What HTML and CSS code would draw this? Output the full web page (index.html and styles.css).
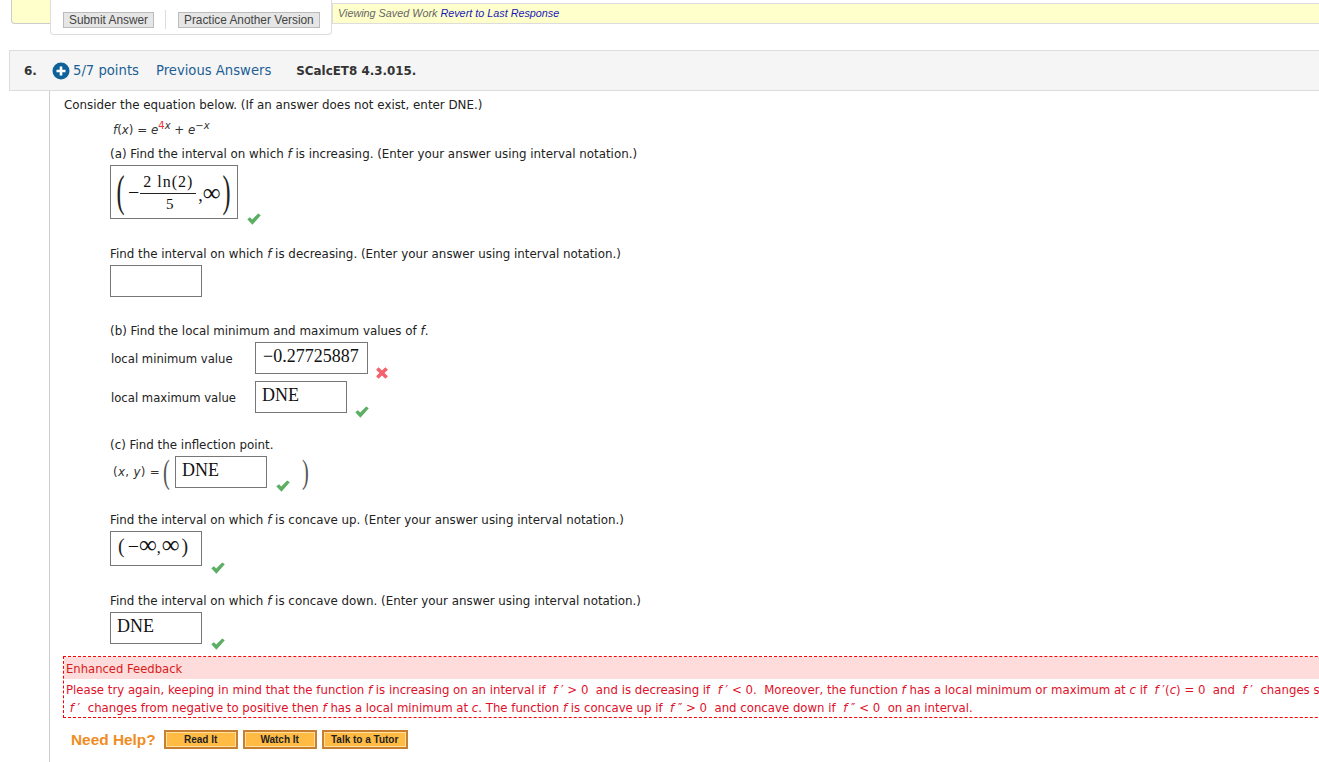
FILE: index.html
```html
<!DOCTYPE html>
<html lang="en">
<head>
<meta charset="utf-8">
<title>Question 6</title>
<link rel="stylesheet" href="styles.css">
</head>
<body>
<svg class="defs" width="0" height="0" aria-hidden="true">
  <symbol id="ok" viewBox="0 0 14 12"><path d="M0.3 6.2 L3 4.2 L5.2 6.4 L11.2 0.4 L13.8 2.2 L5.4 11.8 Z" fill="#5cae62"/></symbol>
  <symbol id="no" viewBox="0 0 12 12"><path d="M2.6 0.2 L6 3.5 L9.4 0.2 L11.9 2.7 L8.5 6 L11.9 9.3 L9.4 11.8 L6 8.5 L2.6 11.8 L0.1 9.3 L3.5 6 L0.1 2.7 Z" fill="#f4606c"/></symbol>
</svg>
<div class="page">
  <div class="topbar">
    <div class="note-left"></div>
    <div class="actions">
      <button class="gray-btn">Submit Answer</button>
      <span class="sep"></span>
      <button class="gray-btn">Practice Another Version</button>
    </div>
    <div class="note-right"><em>Viewing Saved Work <a class="revert">Revert to Last Response</a></em></div>
  </div>

  <div class="qhead">
    <span class="qnum">6.</span>
    <svg class="plus" viewBox="0 0 18 18"><circle cx="9" cy="9" r="8.5" fill="#0f6299"/><path d="M9 4.5v9M4.5 9h9" stroke="#fff" stroke-width="2.6"/></svg>
    <span class="qpoints">5/7 points</span>
    <span class="qprev">Previous Answers</span>
    <span class="qcode">SCalcET8 4.3.015.</span>
  </div>

  <div class="qbody">
    <p class="line intro">Consider the equation below. (If an answer does not exist, enter DNE.)</p>
    <div class="inner">
      <p class="line eq"><i>f</i>(<i>x</i>) = <i>e</i><sup><span class="red">4</span><i>x</i></sup> + <i>e</i><sup>−<i>x</i></sup></p>
      <p class="line q-a">(a) Find the interval on which <i>f</i> is increasing. (Enter your answer using interval notation.)</p>
      <div class="ansrow">
        <div class="box box-frac">
          <span class="paren big">(</span><span class="minus">−</span>
          <span class="frac"><span class="num">2 ln(2)</span><span class="den">5</span></span>
          <span class="tail">,<span class="inf">∞</span></span><span class="paren big">)</span>
        </div>
        <svg class="mark mark-frac"><use href="#ok"/></svg>
      </div>
      <p class="line q-dec">Find the interval on which <i>f</i> is decreasing. (Enter your answer using interval notation.)</p>
      <div class="box box-empty"></div>
      <p class="line q-b">(b) Find the local minimum and maximum values of <i>f</i>.</p>
      <div class="valrow val-min">
        <span class="vallabel">local minimum value</span>
        <div class="box box-wide">−0.27725887</div>
        <svg class="mark mark-no"><use href="#no"/></svg>
      </div>
      <div class="valrow val-max">
        <span class="vallabel">local maximum value</span>
        <div class="box box-std">DNE</div>
        <svg class="mark mark-b"><use href="#ok"/></svg>
      </div>
      <p class="line q-c">(c) Find the inflection point.</p>
      <div class="xyrow">
        <span class="xy">(<i>x</i>, <i>y</i>) =</span>
        <span class="paren mid">(</span>
        <div class="box box-std">DNE</div>
        <svg class="mark mark-c"><use href="#ok"/></svg>
        <span class="paren mid close">)</span>
      </div>
      <p class="line q-up">Find the interval on which <i>f</i> is concave up. (Enter your answer using interval notation.)</p>
      <div class="ansrow">
        <div class="box box-inf"><span class="paren small">(</span><span class="minus-s">−</span><span class="inf">∞</span><span class="comma">,</span><span class="inf">∞</span><span class="paren small closing">)</span></div>
        <svg class="mark mark-inf"><use href="#ok"/></svg>
      </div>
      <p class="line q-down">Find the interval on which <i>f</i> is concave down. (Enter your answer using interval notation.)</p>
      <div class="ansrow">
        <div class="box box-std box-last">DNE</div>
        <svg class="mark mark-last"><use href="#ok"/></svg>
      </div>
    </div>
    <div class="feedback">
      <div class="fb-title">Enhanced Feedback</div>
      <div class="fb-line fb-first">Please try again, keeping in mind that the function <i>f</i> is increasing on an interval if&nbsp; <i>f</i> ′ &gt; 0&nbsp; and is decreasing if&nbsp; <i>f</i> ′ &lt; 0.&nbsp; Moreover, the function <i>f</i> has a local minimum or maximum at <i>c</i> if&nbsp; <i>f</i> ′(<i>c</i>) = 0&nbsp; and&nbsp; <i>f</i> ′&nbsp; changes sign at <i>c</i>. If</div>
      <div class="fb-line fb-second">&nbsp;<i>f</i> ′&nbsp; changes from negative to positive then <i>f</i> has a local minimum at <i>c</i>. The function <i>f</i> is concave up if&nbsp; <i>f</i> ″ &gt; 0&nbsp; and concave down if&nbsp; <i>f</i> ″ &lt; 0&nbsp; on an interval.</div>
    </div>
    <div class="help">
      <span class="help-label">Need Help?</span>
      <button class="help-btn">Read It</button>
      <button class="help-btn">Watch It</button>
      <button class="help-btn wide">Talk to a Tutor</button>
    </div>
  </div>
</div>
</body>
</html>
```

FILE: styles.css
```css
html, body { margin: 0; padding: 0; background: #fff; overflow: hidden; }
body { font-family: "DejaVu Sans", Verdana, sans-serif; font-size: 11.87px; color: #222; }
.defs { position: absolute; }
.page { width: 1319px; height: 762px; overflow: hidden; }

.topbar { display: flex; align-items: flex-start; height: 50px; margin-left: 11px; }
.note-left { width: 38px; height: 23px; background: #ffffcc; border: 1px solid #ccc; border-top: 0; border-right: 0; border-radius: 0 0 0 4px; }
.actions { display: flex; align-items: center; gap: 11px; width: 282px; height: 35px; box-sizing: border-box; padding: 5px 0 0 12px; border: 1px solid #ddd; border-top: 0; border-radius: 0 0 4px 4px; }
.gray-btn { font-family: "Liberation Sans", Arial, sans-serif; font-size: 11.85px; color: #444; background: #e6e6e6; border: 1px solid #bbb; padding: 0 5px; height: 16px; line-height: 14px; white-space: nowrap; }
.sep { width: 1px; height: 19px; background: #ddd; margin-right: 1px; }
.note-right { flex: 1; height: 21px; margin-top: 3px; box-sizing: border-box; background: #ffffcc; border: 1px solid #ddd; border-right: 0; padding-left: 5px; font-family: "Liberation Sans", Arial, sans-serif; font-size: 10.8px; line-height: 18px; color: #666; white-space: nowrap; }
.revert { color: #1a1ab8; }

.qhead { display: flex; align-items: center; height: 41px; box-sizing: border-box; margin-left: 9px; background: #f5f5f5; border: 1px solid #ddd; border-right: 0; font-size: 13.2px; padding-left: 14px; }
.qnum { font-weight: bold; width: 28px; color: #333; font-size: 12px; }
.plus { width: 18px; height: 18px; }
.qpoints { color: #1c5f96; margin-left: 3px; }
.qprev { color: #1c5f96; margin-left: 17px; }
.qcode { color: #333; font-weight: bold; margin-left: 25px; font-size: 11.9px; }

.qbody { margin-left: 49px; height: 672px; border-left: 1px solid #ccc; padding-left: 13px; }
.line { margin: 0; line-height: 16px; white-space: nowrap; }
.intro { padding: 6px 0 0 1px; }
.inner { padding-left: 47px; }
.eq { padding-left: 3px; margin-top: 9px; color: #333; }
sup { font-size: 10px; line-height: 0; }
.red { color: #e33; }
.q-a { margin-top: 8px; }
.ansrow { display: flex; align-items: flex-start; }
.box { box-sizing: border-box; border: 1px solid #777; background: #fff; font-family: "Liberation Serif", serif; font-size: 18px; color: #111; }
.box-frac { display: flex; align-items: center; width: 128px; height: 54px; margin-top: 3px; padding-left: 3px; }
.paren { font-family: "Liberation Serif", serif; font-weight: 300; line-height: 1; color: #222; }
.big { font-size: 44px; transform: scaleX(0.55); width: 11px; text-align: center; }
.mid { font-size: 34px; color: #555; transform: scaleX(0.6); width: 10px; text-align: center; }
.small { font-size: 20px; }
.closing { margin-left: 2px; }
.minus { margin-left: 3px; font-size: 20px; }
.frac { display: flex; flex-direction: column; align-items: center; margin-left: 1px; width: 56px; }
.num { align-self: stretch; text-align: center; border-bottom: 1px solid #222; line-height: 23px; font-size: 16px; letter-spacing: 1px; }
.den { line-height: 20px; font-size: 15px; padding-left: 3px; }
.tail { font-size: 18px; margin-left: 2px; margin-top: 4px; margin-right: -1px; }
.inf { font-size: 25px; line-height: 20px; }
.mark { display: block; flex: none; width: 14px; height: 12px; }
.mark-frac { margin: 51px 0 0 9px; }
.q-dec { margin-top: 21px; }
.box-empty { width: 92px; height: 32px; margin-top: 3px; }
.q-b { margin-top: 26px; }
.valrow { display: flex; align-items: center; height: 32px; }
.val-min { margin-top: 3px; }
.val-max { margin-top: 7px; }
.vallabel { width: 144px; box-sizing: content-box; padding: 2px 0 0 1px; font-size: 11.65px; }
.box-wide, .box-std { height: 32px; line-height: 27px; padding-left: 6px; }
.box-wide { width: 113px; padding-left: 7px; }
.box-std { width: 92px; }
.mark-no { width: 12px; height: 12px; margin: 30px 0 0 8px; }
.mark-b { margin: 30px 0 0 8px; }
.q-c { margin-top: 24px; }
.xyrow { display: flex; align-items: center; height: 32px; margin-top: 3px; }
.xy { padding-left: 3px; color: #333; width: 51px; box-sizing: border-box; white-space: nowrap; letter-spacing: 0.3px; }
.xyrow .box { margin-left: 4px; }
.mark-c { margin: 28px 0 0 9px; }
.close { margin-left: 10px; }
.q-up { margin-top: 24px; }
.box-inf { width: 92px; height: 35px; margin-top: 3px; line-height: 28px; padding-left: 7px; white-space: nowrap; }
.minus-s { font-size: 20px; margin-left: 3px; }
.comma { font-size: 16px; margin-right: 1px; }
.mark-inf { margin: 34px 0 0 9px; }
.q-down { margin-top: 19px; }
.box-last { margin-top: 3px; }
.mark-last { margin: 29px 0 0 9px; }

.feedback { width: 1400px; margin-top: 6px; border: 1px dashed #f00; border-right: 0; height: 62px; box-sizing: border-box; color: #e0102a; white-space: nowrap; font-size: 11.74px; }
.fb-title { height: 22px; line-height: 24px; background: #ffdcdc; padding-left: 2px; color: #d81a1a; font-size: 11.6px; }
.fb-line { padding-left: 2px; line-height: 18px; }
.fb-first { margin-top: 2px; }

.help { display: flex; align-items: center; gap: 5px; margin-top: 12px; padding-left: 8px; }
.help-label { font-family: "Liberation Sans", Arial, sans-serif; font-size: 15.4px; font-weight: bold; color: #f08c1e; margin-right: 3px; }
.help-btn { width: 74px; height: 19px; padding: 0; box-sizing: border-box; background: #ffbb44; border: 2px solid #c87f30; box-shadow: inset 0 0 0 1px #ffe0a0; font-family: "Liberation Sans", Arial, sans-serif; font-size: 10px; font-weight: bold; color: #222; }
.help-btn.wide { width: 86px; }
```
